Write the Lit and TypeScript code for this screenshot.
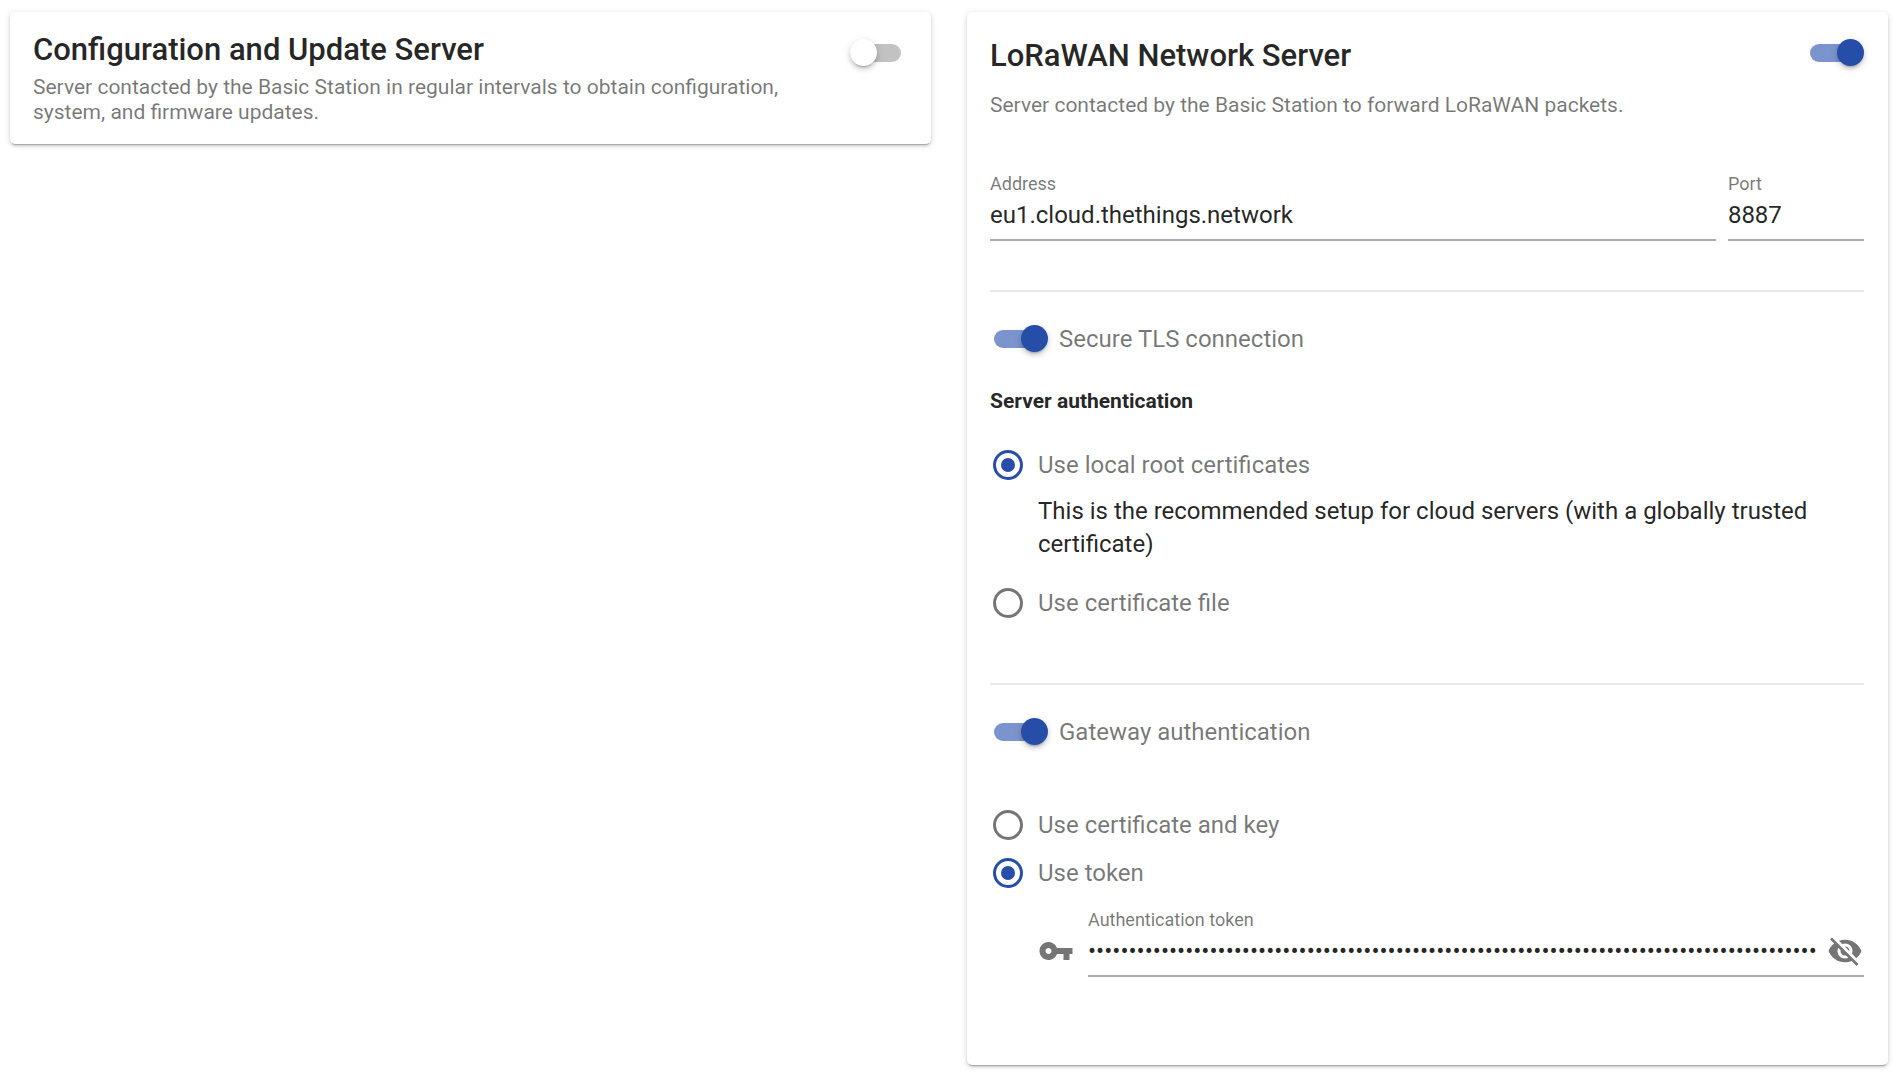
import { LitElement, html, css } from "lit";
import { customElement, property, state } from "lit/decorators.js";

/** Page: the two server settings cards side by side. */
@customElement("app-root")
export class AppRoot extends LitElement {
  static styles = css`
    :host {
      display: block;
      font-family: Roboto, "Liberation Sans", sans-serif;
    }
    .page {
      display: grid;
      grid-template-columns: 1fr 1fr;
      align-items: start;
      gap: 36px;
      padding: 12px 11px 12px 10px;
    }
  `;

  render() {
    return html`
      <main class="page">
        <cups-card></cups-card>
        <lns-card></lns-card>
      </main>
    `;
  }
}

const shared = css`
  :host {
    display: block;
    color: rgba(0, 0, 0, 0.87);
  }
  * {
    box-sizing: border-box;
  }
  .card {
    border-radius: 5px;
    background: #fff;
    box-shadow:
      0 3px 1px -2px rgba(0, 0, 0, 0.2),
      0 2px 3px 0 rgba(0, 0, 0, 0.14),
      0 1px 6px 0 rgba(0, 0, 0, 0.12);
  }
  .header {
    display: flex;
    align-items: flex-start;
    justify-content: space-between;
    gap: 24px;
  }
  .title,
  .subtitle,
  .description {
    margin: 0;
  }
  .title {
    font-size: 31px;
    line-height: 40px;
    font-weight: 500;
  }
  .description {
    font-size: 21px;
    line-height: 25px;
    color: rgba(0, 0, 0, 0.54);
  }
  .switch {
    appearance: none;
    flex: none;
    display: grid;
    align-items: center;
    width: 54px;
    height: 27px;
    margin: 0;
    cursor: pointer;
  }
  .switch::before,
  .switch::after {
    content: "";
    grid-area: 1 / 1;
  }
  .switch::before {
    width: 51px;
    height: 18px;
    border-radius: 9px;
    background: rgba(0, 0, 0, 0.24);
  }
  .switch::after {
    width: 27px;
    height: 27px;
    border-radius: 50%;
    background: #fff;
    box-shadow:
      0 3px 2px -2px rgba(0, 0, 0, 0.2),
      0 3px 4px 0 rgba(0, 0, 0, 0.14),
      0 2px 8px 0 rgba(0, 0, 0, 0.12);
  }
  .switch:checked::before {
    background: #7c94cd;
  }
  .switch:checked::after {
    justify-self: end;
    background: #264ea9;
  }
`;

/** Configuration and update server card. */
@customElement("cups-card")
export class CupsCard extends LitElement {
  static styles = [
    shared,
    css`
      .card {
        padding: 18px 24px 19px 23px;
      }
      .header {
        padding-right: 3px;
      }
      .description {
        margin-top: 5px;
      }
      .switch {
        margin-top: 9px;
      }
    `,
  ];

  @state() private active = false;

  render() {
    return html`
      <section class="card">
        <header class="header">
          <div>
            <h2 class="title" id="title">Configuration and Update Server</h2>
            <p class="description">
              Server contacted by the Basic Station in regular intervals to obtain configuration,<br />
              system, and firmware updates.
            </p>
          </div>
          <input
            class="switch"
            type="checkbox"
            role="switch"
            aria-labelledby="title"
            .checked=${this.active}
            @change=${(e: Event) => (this.active = (e.target as HTMLInputElement).checked)}
          />
        </header>
      </section>
    `;
  }
}

/** LoRaWAN network server card. */
@customElement("lns-card")
export class LnsCard extends LitElement {
  static styles = [
    shared,
    css`
      .card {
        padding: 24px 24px 88px 23px;
      }
      .header .switch {
        margin-top: 3px;
      }
      .description {
        margin-top: 17px;
      }
      .fields {
        display: grid;
        grid-template-columns: 16fr 3fr;
        gap: 12px;
        margin-top: 54px;
      }
      .field {
        min-width: 0;
      }
      .field-label {
        display: block;
        font-size: 18px;
        line-height: 24px;
        color: rgba(0, 0, 0, 0.54);
      }
      .field-box {
        display: flex;
        height: 45px;
        padding-top: 3px;
        border-bottom: 2px solid rgba(0, 0, 0, 0.33);
      }
      .field-input {
        flex: 1;
        min-width: 0;
        height: 32px;
        padding: 0;
        border: 0;
        outline: 0;
        background: none;
        font: inherit;
        font-size: 24px;
        line-height: 32px;
        color: inherit;
      }
      .divider {
        height: 2px;
        margin: 49px 0 31px;
        border: 0;
        background: rgba(0, 0, 0, 0.09);
      }
      .divider.second {
        margin-top: 64px;
      }
      .option {
        display: flex;
        font-size: 24px;
        line-height: 32px;
        color: rgba(0, 0, 0, 0.54);
        cursor: pointer;
      }
      .toggle {
        align-items: flex-start;
        gap: 11px;
        padding-left: 4px;
      }
      .toggle .switch {
        margin-top: 2px;
      }
      .choice {
        align-items: center;
        gap: 15px;
        padding-left: 3px;
      }
      .radio {
        appearance: none;
        flex: none;
        display: grid;
        place-items: center;
        width: 30px;
        height: 30px;
        margin: 0;
        border: 3px solid rgba(0, 0, 0, 0.54);
        border-radius: 50%;
        cursor: pointer;
      }
      .radio:checked {
        border-color: #264ea9;
      }
      .radio:checked::before {
        content: "";
        width: 14px;
        height: 14px;
        border-radius: 50%;
        background: #264ea9;
      }
      .subtitle {
        margin-top: 34px;
        font-size: 21px;
        line-height: 25px;
        font-weight: 700;
      }
      .group {
        display: flex;
        flex-direction: column;
      }
      .group.server {
        margin-top: 35px;
        gap: 26px;
      }
      .group.gateway {
        margin-top: 61px;
        gap: 16px;
      }
      .hint {
        margin: 14px 0 0 48px;
        font-size: 24px;
        line-height: 33px;
      }
      .token {
        display: flex;
        align-items: flex-start;
        gap: 14px;
        margin: 19px 0 0 48px;
      }
      .token .field {
        flex: 1;
      }
      .icon {
        display: block;
        flex: none;
        width: 36px;
        height: 36px;
        fill: rgba(0, 0, 0, 0.54);
      }
      .key {
        margin-top: 25px;
      }
      .reveal {
        flex: none;
        height: 36px;
        margin: -2px 1px 0 0;
        padding: 0;
        border: 0;
        background: none;
        cursor: pointer;
      }
    `,
  ];

  @state() private revealed = false;

  @property() token = "NNSXS.".padEnd(90, "Q7XK2MZR4TLB");

  render() {
    return html`
      <section class="card">
        <header class="header">
          <h2 class="title" id="title">LoRaWAN Network Server</h2>
          <input class="switch" type="checkbox" role="switch" aria-labelledby="title" checked />
        </header>
        <p class="description">Server contacted by the Basic Station to forward LoRaWAN packets.</p>

        <div class="fields">
          <div class="field">
            <label class="field-label" for="address">Address</label>
            <div class="field-box">
              <input class="field-input" id="address" type="text" value="eu1.cloud.thethings.network" />
            </div>
          </div>
          <div class="field">
            <label class="field-label" for="port">Port</label>
            <div class="field-box">
              <input class="field-input" id="port" type="text" inputmode="numeric" value="8887" />
            </div>
          </div>
        </div>

        <hr class="divider" />

        <label class="option toggle">
          <input class="switch" type="checkbox" role="switch" checked />
          Secure TLS connection
        </label>

        <h3 class="subtitle" id="server-auth">Server authentication</h3>
        <div class="group server" role="radiogroup" aria-labelledby="server-auth">
          <div>
            <label class="option choice">
              <input class="radio" type="radio" name="server-auth" checked />
              Use local root certificates
            </label>
            <p class="hint">
              This is the recommended setup for cloud servers (with a globally trusted certificate)
            </p>
          </div>
          <label class="option choice">
            <input class="radio" type="radio" name="server-auth" />
            Use certificate file
          </label>
        </div>

        <hr class="divider second" />

        <label class="option toggle">
          <input class="switch" type="checkbox" role="switch" checked />
          <span id="gateway-auth">Gateway authentication</span>
        </label>

        <div class="group gateway" role="radiogroup" aria-labelledby="gateway-auth">
          <label class="option choice">
            <input class="radio" type="radio" name="gateway-auth" />
            Use certificate and key
          </label>
          <label class="option choice">
            <input class="radio" type="radio" name="gateway-auth" checked />
            Use token
          </label>
        </div>

        <div class="token">
          <svg class="icon key" viewBox="0 0 24 24" aria-hidden="true">
            <path
              d="M12.65 10C11.83 7.67 9.61 6 7 6c-3.31 0-6 2.69-6 6s2.69 6 6 6c2.61 0 4.83-1.67 5.65-4H17v4h4v-4h2v-4H12.65zM7 14c-1.1 0-2-.9-2-2s.9-2 2-2 2 .9 2 2-.9 2-2 2z"
            />
          </svg>
          <div class="field">
            <label class="field-label" for="token">Authentication token</label>
            <div class="field-box">
              <input
                class="field-input"
                id="token"
                type=${this.revealed ? "text" : "password"}
                .value=${this.token}
              />
              <button
                class="reveal"
                type="button"
                aria-label="Show token"
                @click=${() => (this.revealed = !this.revealed)}
              >
                <svg class="icon" viewBox="0 0 24 24" aria-hidden="true">
                  <path
                    d="M12 7c2.76 0 5 2.24 5 5 0 .65-.13 1.26-.36 1.83l2.92 2.92c1.51-1.26 2.7-2.89 3.43-4.75-1.73-4.39-6-7.5-11-7.5-1.4 0-2.74.25-3.98.7l2.16 2.16C10.74 7.13 11.35 7 12 7zM2 4.27l2.28 2.28.46.46C3.08 8.3 1.78 10.02 1 12c1.73 4.39 6 7.5 11 7.5 1.55 0 3.03-.3 4.38-.84l.42.42L19.73 22 21 20.73 3.27 3 2 4.27zM7.53 9.8l1.55 1.55c-.05.21-.08.43-.08.65 0 1.66 1.34 3 3 3 .22 0 .44-.03.65-.08l1.55 1.55c-.67.33-1.41.53-2.2.53-2.76 0-5-2.24-5-5 0-.79.2-1.53.53-2.2zm4.31-.78l3.15 3.15.02-.16c0-1.66-1.34-3-3-3l-.17.01z"
                  />
                </svg>
              </button>
            </div>
          </div>
        </div>
      </section>
    `;
  }
}
